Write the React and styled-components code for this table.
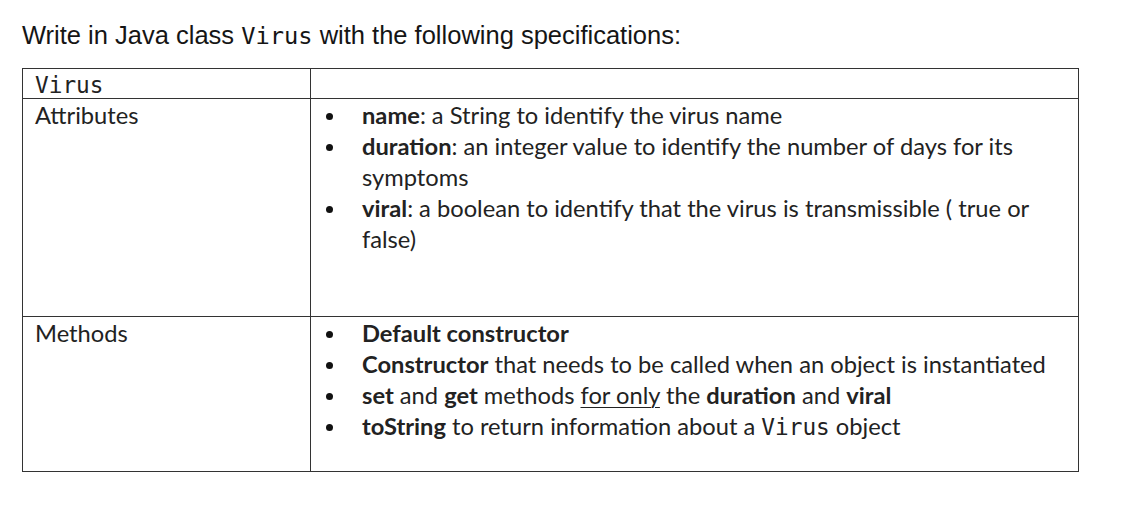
import React from "react"
import styled, { createGlobalStyle } from "styled-components"

const GlobalStyle = createGlobalStyle`
  body {
    margin: 0;
    background: #ffffff;
  }
`

const Page = styled.div`
  padding: 19px 0 0 22px;
  width: 1057px;
`

const Heading = styled.p`
  margin: 0 0 17px 0;
  font-family: "Liberation Sans", Arial, sans-serif;
  font-size: 25.5px;
  line-height: 32px;
  color: #151515;
`

const Code = styled.code`
  font-family: "DejaVu Sans Mono", "Liberation Mono", monospace;
  font-size: ${(p) => p.$size || "0.96em"};
  line-height: 1;
`

const Spec = styled.table`
  width: 1057px;
  border-collapse: collapse;
  table-layout: fixed;
  font-family: Lato, "Open Sans", sans-serif;
  font-size: 23.7px;
  color: #222;
`

const Row = styled.tr`
  height: ${(p) => p.$h}px;
`

const Cell = styled.td`
  border: 1.5px solid #333;
  vertical-align: top;
  padding: ${(p) => (p.$tight ? "1px" : "1px")} 12px 0 12px;
  line-height: ${(p) => (p.$tight ? "28px" : "31px")};
  width: ${(p) => (p.$w ? `${p.$w}px` : "auto")};
`

const List = styled.ul`
  list-style: none;
  margin: 0;
  padding: 0;
`

const Item = styled.li`
  display: grid;
  grid-template-columns: 39px 1fr;
`

const Bullet = styled.span`
  width: 7px;
  height: 7px;
  border-radius: 50%;
  background: #111;
  margin: 13px 0 0 3px;
`

const Under = styled.span`
  text-decoration: underline;
  text-decoration-thickness: 1px;
  text-underline-offset: 3px;
`

const Point = ({ children }) => (
  <Item>
    <Bullet />
    <span>{children}</span>
  </Item>
)

export default function App() {
  return (
    <Page>
      <GlobalStyle />
      <Heading>
        Write in Java class <Code $size="0.93em">Virus</Code> with the following specifications:
      </Heading>
      <Spec>
        <tbody>
          <Row $h={30}>
            <Cell $w={263} $tight>
              <Code>Virus</Code>
            </Cell>
            <Cell $tight />
          </Row>
          <Row $h={218}>
            <Cell>Attributes</Cell>
            <Cell>
              <List>
                <Point>
                  <b>name</b>: a String to identify the virus name
                </Point>
                <Point>
                  <b>duration</b>: an integer value to identify the number of days for its symptoms
                </Point>
                <Point>
                  <b>viral</b>: a boolean to identify that the virus is transmissible ( true or false)
                </Point>
              </List>
            </Cell>
          </Row>
          <Row $h={155}>
            <Cell>Methods</Cell>
            <Cell>
              <List>
                <Point>
                  <b>Default constructor</b>
                </Point>
                <Point>
                  <b>Constructor</b> that needs to be called when an object is instantiated
                </Point>
                <Point>
                  <b>set</b> and <b>get</b> methods <Under>for only</Under> the <b>duration</b> and <b>viral</b>
                </Point>
                <Point>
                  <b>toString</b> to return information about a <Code>Virus</Code> object
                </Point>
              </List>
            </Cell>
          </Row>
        </tbody>
      </Spec>
    </Page>
  )
}
